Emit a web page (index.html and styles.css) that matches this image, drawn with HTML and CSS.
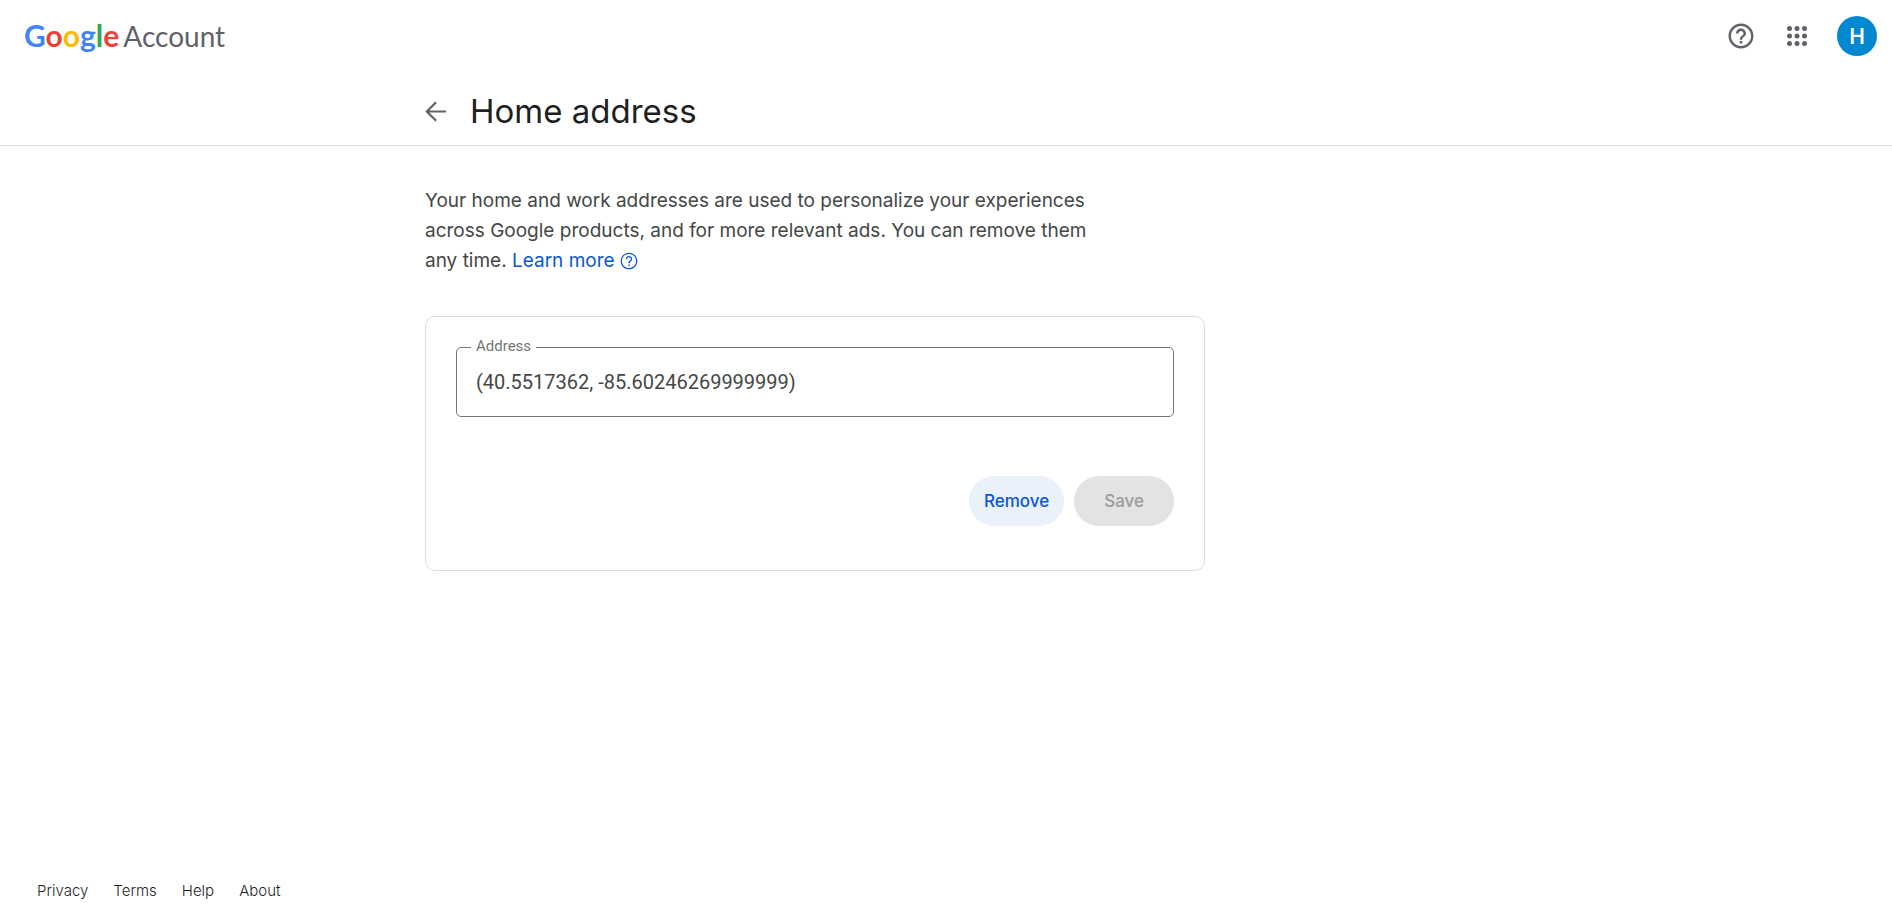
FILE: index.html
```html
<!DOCTYPE html>
<html lang="en">
<head>
    <meta charset="UTF-8">
    <meta name="viewport" content="width=device-width, initial-scale=1.0">
    <title>Home address</title>
    <link rel="stylesheet" href="styles.css">
</head>
<body>
    <header class="topbar">
        <a class="brand" href="#">
            <span class="logo"><span class="blue">G</span><span class="red">o</span><span class="yellow">o</span><span class="blue">g</span><span class="green">l</span><span class="red">e</span></span>
            <span class="product">Account</span>
        </a>
        <div class="topbar-actions">
            <button class="icon-button" type="button" aria-label="Help">
                <svg width="30" height="30" viewBox="0 0 24 24" fill="currentColor">
                    <path d="M11 18h2v-2h-2v2zm1-16C6.480 2 2 6.480 2 12s4.480 10 10 10 10-4.480 10-10S17.520 2 12 2zm0 18c-4.410 0-8-3.590-8-8s3.590-8 8-8 8 3.590 8 8-3.590 8-8 8zm0-14c-2.210 0-4 1.790-4 4h2c0-1.100.9-2 2-2s2 .9 2 2c0 2-3 1.750-3 5h2c0-2.250 3-2.500 3-5 0-2.210-1.790-4-4-4z"/>
                </svg>
            </button>
            <button class="icon-button" type="button" aria-label="Google apps">
                <svg width="30" height="30" viewBox="0 0 24 24" fill="currentColor">
                    <circle cx="6" cy="6" r="2"/><circle cx="12" cy="6" r="2"/><circle cx="18" cy="6" r="2"/>
                    <circle cx="6" cy="12" r="2"/><circle cx="12" cy="12" r="2"/><circle cx="18" cy="12" r="2"/>
                    <circle cx="6" cy="18" r="2"/><circle cx="12" cy="18" r="2"/><circle cx="18" cy="18" r="2"/>
                </svg>
            </button>
            <button class="avatar" type="button" aria-label="Profile">H</button>
        </div>
    </header>

    <div class="page-title">
        <div class="container">
            <a class="back" href="#" aria-label="Back">
                <svg width="21" height="21" viewBox="3 4 17 17" fill="none" stroke="currentColor" stroke-width="1.800">
                    <path d="M20 12.500H5M12 5l-7.500 7.500L12 20"/>
                </svg>
            </a>
            <h1>Home address</h1>
        </div>
    </div>

    <main class="container content">
        <p class="intro">Your home and work addresses are used to personalize your experiences
            across Google products, and for more relevant ads. You can remove them any time.
            <a href="#">Learn more<svg class="help-icon" width="20" height="20" viewBox="0 0 24 24" fill="currentColor">
                <path d="M11.200 18h1.700v-1.700h-1.700V18zM12 2C6.480 2 2 6.480 2 12s4.480 10 10 10 10-4.480 10-10S17.520 2 12 2zm0 18.500c-4.700 0-8.500-3.800-8.500-8.500S7.300 3.500 12 3.500s8.500 3.800 8.500 8.500-3.800 8.500-8.500 8.500zM12 6c-2.210 0-3.800 1.600-3.800 3.800h1.600c0-1.300.9-2.200 2.200-2.200s2.200.9 2.200 2.100c0 2-3 2-3 5.100h1.700c0-2.250 3-2.600 3-5.100C15.900 7.600 14.200 6 12 6z"/>
            </svg></a>
        </p>

        <form class="card">
            <div class="field">
                <label for="address">Address</label>
                <input type="text" id="address" value="(40.5517362, -85.60246269999999)">
            </div>
            <div class="buttons">
                <button class="btn btn-remove" type="button">Remove</button>
                <button class="btn btn-save" type="submit" disabled>Save</button>
            </div>
        </form>
    </main>

    <footer class="footer">
        <a href="#">Privacy</a>
        <a href="#">Terms</a>
        <a href="#">Help</a>
        <a href="#">About</a>
    </footer>
</body>
</html>
```
FILE: styles.css
```css
* {
    box-sizing: border-box;
}

body {
    margin: 0;
    min-height: 100vh;
    display: flex;
    flex-direction: column;
    background: #fff;
    color: #444746;
    font-family: Inter, Roboto, sans-serif;
}

a {
    text-decoration: none;
}

button {
    font-family: inherit;
    border: none;
    cursor: pointer;
}

svg {
    display: block;
}

/* top bar */
.topbar {
    display: flex;
    align-items: center;
    justify-content: space-between;
    height: 72px;
    padding: 0 15px 0 24px;
}

.brand {
    display: flex;
    align-items: baseline;
    gap: 4px;
    padding-bottom: 2px;
    color: #5f6368;
}

.logo {
    font-family: Lato, sans-serif;
    font-size: 30px;
    font-weight: 700;
}

.product {
    font-family: Lato, sans-serif;
    font-size: 28px;
}

.blue { color: #4285f4; }
.red { color: #ea4335; }
.yellow { color: #fbbc05; }
.green { color: #34a853; }

.topbar-actions {
    display: flex;
    align-items: center;
}

.icon-button {
    display: flex;
    align-items: center;
    justify-content: center;
    width: 56px;
    height: 50px;
    padding: 0;
    background: none;
    color: #5f6368;
}

.avatar {
    width: 40px;
    height: 40px;
    margin-left: 12px;
    padding: 0;
    border-radius: 50%;
    background: #0288d1;
    color: #fff;
    font-family: Roboto, sans-serif;
    font-size: 22px;
    font-weight: 500;
}

/* title row */
.container {
    width: 100%;
    max-width: 1042px;
    margin: 0 auto;
}

.page-title {
    border-bottom: 1px solid #dadce0;
}

.page-title .container {
    display: flex;
    align-items: center;
    gap: 24px;
    height: 73px;
    padding-top: 5px;
}

.back {
    color: #5f6368;
}

h1 {
    margin: 0;
    color: #1f1f1f;
    font-size: 33px;
    font-weight: 400;
}

/* content */
.content {
    flex: 1;
}

.intro {
    max-width: 680px;
    margin: 40px 0;
    font-size: 19px;
    line-height: 30px;
}

.intro a {
    color: #0b57d0;
}

.help-icon {
    display: inline-block;
    margin-left: 4px;
    vertical-align: -4px;
}

.card {
    max-width: 780px;
    padding: 30px 30px 44px;
    border: 1px solid #dadce0;
    border-radius: 10px;
}

.field {
    position: relative;
    font-family: Roboto, sans-serif;
}

/* label sits on the outline of the input */
.field label {
    position: absolute;
    top: -10px;
    left: 15px;
    padding: 0 5px;
    background: #fff;
    color: #747775;
    font-size: 15px;
    line-height: 18px;
}

.field input {
    width: 100%;
    height: 70px;
    padding: 0 19px;
    border: 1px solid #747775;
    border-radius: 5px;
    background: #fff;
    color: #444746;
    font-family: inherit;
    font-size: 20px;
}

.buttons {
    display: flex;
    justify-content: flex-end;
    gap: 10px;
    margin-top: 59px;
}

.btn {
    height: 50px;
    padding: 0 15px;
    border-radius: 25px;
    font-size: 17px;
    font-weight: 500;
}

.btn-remove {
    background: #eaf1fb;
    color: #0b57d0;
}

.btn-save {
    padding: 0 30px;
    background: #e3e3e3;
    color: #9a9b9b;
    cursor: default;
}

/* footer */
.footer {
    display: flex;
    gap: 25px;
    padding: 0 37px 18px;
    font-size: 15px;
    font-weight: 300;
    line-height: 20px;
}

.footer a {
    color: #1f1f1f;
}
```
